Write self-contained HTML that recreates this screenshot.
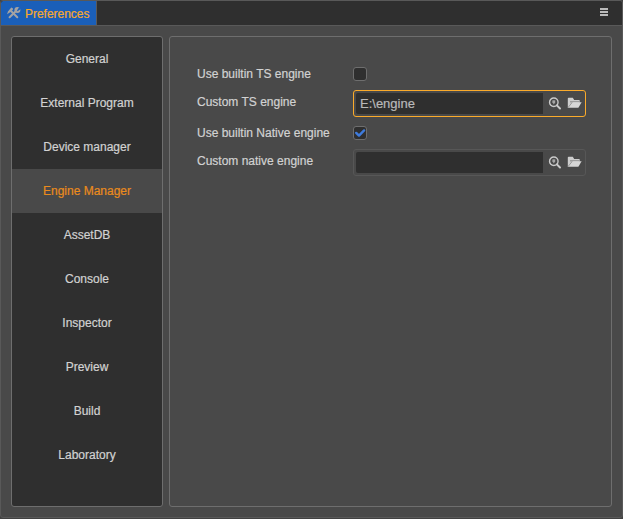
<!DOCTYPE html>
<html><head><meta charset="utf-8">
<style>
*{margin:0;padding:0;box-sizing:border-box}
html,body{width:623px;height:519px;overflow:hidden;background:#424242;font-family:"Liberation Sans",sans-serif;-webkit-text-stroke:0.2px currentColor}
.frame{position:absolute;left:0;top:0;width:623px;height:518px;border:1px solid #595959;border-radius:3px;background:#494949;overflow:hidden}
.header{position:absolute;left:0;top:0;width:621px;height:24px;background:#2f2f2f}
.hline{position:absolute;left:0;top:24px;width:621px;height:1px;background:#595959}
.tab{position:absolute;left:0;top:0;width:95px;height:24px;background:#1a5fb9;border-top-left-radius:2px}
.tabsep{position:absolute;left:95px;top:0;width:1px;height:24px;background:#595959}
.tabtxt{position:absolute;left:24px;top:6px;font-size:12px;line-height:14px;color:#f9a92a;white-space:nowrap;letter-spacing:-0.03px}
.menu{position:absolute;left:599px;top:7px;width:8px;height:8px}
.menu i{display:block;height:2px;background:#bababa;margin-bottom:1px}
.side{position:absolute;left:10px;top:35px;width:152px;height:471px;border:1px solid #6e6e6e;border-radius:3px;background:#2f2f2f;overflow:hidden}
.item{position:absolute;left:0;width:150px;height:44px;text-align:center;font-size:12px;line-height:14px;color:#d2d2d2;white-space:nowrap}
.item span{position:absolute;left:0;right:0;top:15px}
.item.sel{background:#494949;color:#e98b1d}
.panel{position:absolute;left:168px;top:35px;width:443px;height:471px;border:1px solid #6e6e6e;border-radius:3px;background:#494949}
.lbl{position:absolute;left:196px;font-size:12px;line-height:14px;color:#d2d2d2;white-space:nowrap}
.cb{position:absolute;left:352px;width:14px;height:14px;border:1px solid #6e6e6e;border-radius:3px;background:#2f2f2f}
.inp{position:absolute;left:352px;width:233px;height:27px;border:1px solid #575757;border-radius:3px;background:#494949}
.inp.focus{border-color:#fbab2b}
.inp .field{position:absolute;left:2px;top:2px;width:187px;height:21px;background:#2f2f2f;border-radius:2px 0 0 2px}
.inp .val{position:absolute;left:6px;top:5px;font-size:13px;line-height:15px;color:#b9b9b9;white-space:nowrap}
.ico{position:absolute;top:0}
</style></head>
<body>
<div class="frame">
  <div class="header"></div>
  <div class="hline"></div>
  <div class="tab">
    <svg style="position:absolute;left:4px;top:4px" width="16" height="16" viewBox="0 0 16 16">
      <defs><mask id="wm"><rect width="16" height="16" fill="#fff"/><path d="M12.0 5.6 L14.2 2.0 L16 3.8 L12.6 6.2 Z" fill="#000"/></mask></defs>
      <g fill="none" stroke="#a3a3a3" stroke-width="2" stroke-linecap="round">
        <path d="M4.6 12.2 L11 6"/>
        <path d="M12.3 12.2 L6.5 6.5"/>
      </g>
      <path d="M2.1 9.2 L2.9 6.6 L6.3 2.4 L7.9 3.3 L7.9 4.8 L5.6 7.1 L3.6 8.2 Z" fill="#a3a3a3"/>
      <circle cx="12.4" cy="5.0" r="3.0" fill="#a3a3a3" mask="url(#wm)"/>
    </svg>
    <div class="tabtxt">Preferences</div>
  </div>
  <div class="tabsep"></div>
  <div class="menu"><i></i><i></i><i></i></div>

  <div class="side">
    <div class="item" style="top:0px"><span>General</span></div>
    <div class="item" style="top:44px"><span>External Program</span></div>
    <div class="item" style="top:88px"><span>Device manager</span></div>
    <div class="item sel" style="top:132px"><span>Engine Manager</span></div>
    <div class="item" style="top:176px"><span>AssetDB</span></div>
    <div class="item" style="top:220px"><span>Console</span></div>
    <div class="item" style="top:264px"><span>Inspector</span></div>
    <div class="item" style="top:308px"><span>Preview</span></div>
    <div class="item" style="top:352px"><span>Build</span></div>
    <div class="item" style="top:396px"><span>Laboratory</span></div>
  </div>

  <div class="panel"></div>

  <div class="lbl" style="top:66px">Use builtin TS engine</div>
  <div class="cb" style="top:66px"></div>

  <div class="lbl" style="top:94px">Custom TS engine</div>
  <div class="inp focus" style="top:89px">
    <div class="field"></div>
    <div class="val">E:\engine</div>
    <svg class="ico" style="left:193px;top:5px" width="14" height="14" viewBox="0 0 14 14">
      <circle cx="6.8" cy="6.3" r="4.25" fill="none" stroke="#c9c9c9" stroke-width="1.4"/>
      <path d="M9.9 9.4 L13.0 12.5" stroke="#c9c9c9" stroke-width="2" stroke-linecap="round"/>
      <path d="M5.3 4.6 Q6.8 3.9 8.3 4.6 L8.2 6.2 L6.8 8.5 L5.4 6.2 Z" fill="#a6a6a6"/>
    </svg>
    <svg class="ico" style="left:213px;top:6px" width="16" height="12" viewBox="0 0 16 12">
      <path d="M0.8 1.6 Q0.8 0.85 1.6 0.85 L5.8 0.85 L7.2 3.0 L12.6 3.0 L12.6 5.4 L0.8 10.8 Z" fill="#cdcdcd"/>
      <rect x="3" y="4" width="9.6" height="1.5" fill="#9d9d9d"/>
      <path d="M5.4 5.3 L14.6 5.3 L11.4 10.8 L0.9 10.8 Z" fill="#d6d6d6"/><path d="M5.2 5.4 L1.0 10.6" stroke="#8a8a8a" stroke-width="0.8"/>
    </svg>
  </div>

  <div class="lbl" style="top:125px">Use builtin Native engine</div>
  <div class="cb" style="top:125px">
    <svg style="position:absolute;left:0;top:0" width="12" height="12" viewBox="0 0 12 12">
      <path d="M2.2 5.9 L5 8.6 L10.1 3.4" fill="none" stroke="#3e7bdd" stroke-width="2.4" stroke-linecap="round" stroke-linejoin="round"/>
    </svg>
  </div>

  <div class="lbl" style="top:153px">Custom native engine</div>
  <div class="inp" style="top:148px">
    <div class="field"></div>
    <svg class="ico" style="left:193px;top:5px" width="14" height="14" viewBox="0 0 14 14">
      <circle cx="6.8" cy="6.3" r="4.25" fill="none" stroke="#c9c9c9" stroke-width="1.4"/>
      <path d="M9.9 9.4 L13.0 12.5" stroke="#c9c9c9" stroke-width="2" stroke-linecap="round"/>
      <path d="M5.3 4.6 Q6.8 3.9 8.3 4.6 L8.2 6.2 L6.8 8.5 L5.4 6.2 Z" fill="#a6a6a6"/>
    </svg>
    <svg class="ico" style="left:213px;top:6px" width="16" height="12" viewBox="0 0 16 12">
      <path d="M0.8 1.6 Q0.8 0.85 1.6 0.85 L5.8 0.85 L7.2 3.0 L12.6 3.0 L12.6 5.4 L0.8 10.8 Z" fill="#cdcdcd"/>
      <rect x="3" y="4" width="9.6" height="1.5" fill="#9d9d9d"/>
      <path d="M5.4 5.3 L14.6 5.3 L11.4 10.8 L0.9 10.8 Z" fill="#d6d6d6"/><path d="M5.2 5.4 L1.0 10.6" stroke="#8a8a8a" stroke-width="0.8"/>
    </svg>
  </div>
</div>
</body></html>
